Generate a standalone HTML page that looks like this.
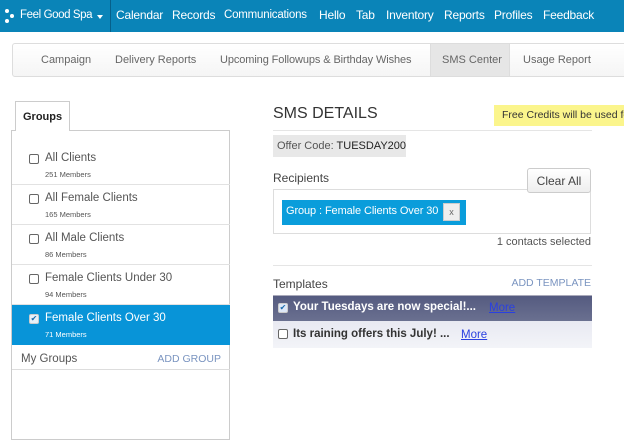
<!DOCTYPE html>
<html><head><meta charset="utf-8"><style>
*{margin:0;padding:0;box-sizing:border-box}
body{width:624px;height:436px;overflow:hidden;background:#fff;font-family:"Liberation Sans",sans-serif;position:relative;color:#444}
.a{position:absolute;white-space:nowrap}
.nav{left:0;top:0;width:624px;height:32px;background:#0a84b8}
.nav span{position:absolute;top:8px;color:#fff;font-size:12px;letter-spacing:-0.2px}
.cb{position:absolute;width:10px;height:10px;border:1.3px solid #666;border-radius:2px;background:#fff}
.row{position:absolute;left:12px;width:218px;height:40px;border-bottom:1px solid #e2e2e2}
.row .t{position:absolute;left:33px;top:7px;font-size:11.5px;color:#555}
.row .m{position:absolute;left:33px;top:25px;font-size:7.5px;color:#555}
.row .cb{left:17px;top:9px}
.s{font-size:11px;color:#666;top:54px}
.r{text-align:right}
</style></head><body>
<div class="a nav">
 <div class="a" style="left:5px;top:9px;width:4px;height:4px;border-radius:50%;background:#fff"></div>
 <div class="a" style="left:10px;top:14px;width:4px;height:4px;border-radius:50%;background:#fff"></div>
 <div class="a" style="left:5px;top:19px;width:4px;height:4px;border-radius:50%;background:#fff"></div>
 <span style="left:20px;top:9px;font-size:11.5px;letter-spacing:-0.4px">Feel Good Spa</span>
 <div class="a" style="left:97px;top:15px;border:3.5px solid transparent;border-top:4px solid #fff"></div>
 <div class="a" style="left:110px;top:0;width:1px;height:32px;background:#06608a"></div>
 <span style="left:116px">Calendar</span>
 <span style="left:172px">Records</span>
 <span style="left:224px;top:9px;font-size:11.5px">Communications</span>
 <span style="left:319px">Hello</span>
 <span style="left:356px">Tab</span>
 <span style="left:386px">Inventory</span>
 <span style="left:444px">Reports</span>
 <span style="left:494px">Profiles</span>
 <span style="left:543px">Feedback</span>
 <div class="a" style="left:261px;top:27px;border:5px solid transparent;border-bottom:5px solid #fff"></div>
</div>
<div class="a" style="left:12px;top:43px;width:620px;height:34px;border:1px solid #ddd;border-radius:3px;background:linear-gradient(#fff,#f5f5f5)"></div>
<div class="a" style="left:430px;top:44px;width:80px;height:32px;background:#e6e6e6;border-left:1px solid #ddd;border-right:1px solid #ddd"></div>
<div class="a s" style="left:41px">Campaign</div>
<div class="a s" style="left:115px">Delivery Reports</div>
<div class="a s" style="left:220px;letter-spacing:-0.1px">Upcoming Followups &amp; Birthday Wishes</div>
<div class="a s" style="left:442px">SMS Center</div>
<div class="a s" style="left:523px">Usage Report</div>

<div class="a" style="left:11px;top:130px;width:219px;height:310px;border:1px solid #ccc"></div>
<div class="a" style="left:15px;top:101px;width:55px;height:30px;border:1px solid #ccc;border-bottom:none;background:#fff;font-size:11px;font-weight:bold;color:#222;padding:9px 0 0 7px">Groups</div>
<div class="row" style="top:145px"><div class="cb"></div><div class="t">All Clients</div><div class="m">251 Members</div></div>
<div class="row" style="top:185px"><div class="cb"></div><div class="t">All Female Clients</div><div class="m">165 Members</div></div>
<div class="row" style="top:225px"><div class="cb"></div><div class="t">All Male Clients</div><div class="m">86 Members</div></div>
<div class="row" style="top:265px"><div class="cb"></div><div class="t">Female Clients Under 30</div><div class="m">94 Members</div></div>
<div class="row" style="top:305px;background:#0894d8;border:none"><div class="cb" style="border-color:#ccc;background:#e8f0f8;font-size:8px;line-height:8px;color:#1a6aaa;text-align:center">✔</div><div class="t" style="color:#fff">Female Clients Over 30</div><div class="m" style="color:#fff">71 Members</div></div>
<div class="a" style="left:21px;top:353px;font-size:11.5px;color:#555">My Groups</div>
<div class="a r" style="left:120px;width:101px;top:353px;font-size:10.5px;color:#7a94c0">ADD GROUP</div>
<div class="a" style="left:12px;top:369px;width:218px;height:1px;background:#ddd"></div>

<div class="a" style="left:273px;top:105px;font-size:16px;color:#333">SMS DETAILS</div>
<div class="a" style="left:494px;top:105px;width:140px;height:21px;background:#fbf58c;font-size:10.5px;color:#333;padding:4px 0 0 8px">Free Credits will be used fo</div>
<div class="a" style="left:273px;top:130px;width:319px;height:1px;background:#e5e5e5"></div>
<div class="a" style="left:273px;top:135px;width:133px;height:22px;background:#e8e8e8;font-size:11px;color:#555;padding:5px 0 0 4px">Offer Code: <span style="color:#222">TUESDAY200</span></div>
<div class="a" style="left:273px;top:171px;font-size:12px;color:#444">Recipients</div>
<div class="a" style="left:273px;top:189px;width:318px;height:45px;border:1px solid #ddd"></div>
<div class="a" style="left:527px;top:168px;width:64px;height:25px;border:1px solid #ccc;border-radius:3px;background:linear-gradient(#fff,#eee);font-size:12px;color:#444;text-align:center;padding-top:5px">Clear All</div>
<div class="a" style="left:282px;top:200px;width:184px;height:25px;background:#0a9ddb;color:#fff;font-size:11px;padding:5px 0 0 4px;letter-spacing:-0.1px">Group : Female Clients Over 30</div>
<div class="a" style="left:443px;top:203px;width:17px;height:18px;background:#eee;border:1px solid #ccc;font-size:9px;color:#666;text-align:center;padding-top:3px">x</div>
<div class="a r" style="left:450px;width:141px;top:236px;font-size:11px;color:#555">1 contacts selected</div>
<div class="a" style="left:273px;top:265px;width:319px;height:1px;background:#e5e5e5"></div>
<div class="a" style="left:273px;top:277px;font-size:12px;color:#444">Templates</div>
<div class="a r" style="left:480px;width:111px;top:277px;font-size:10.5px;color:#7a94c0">ADD TEMPLATE</div>
<div class="a" style="left:273px;top:295px;width:319px;height:26px;background:linear-gradient(#555b80,#6a7090);border-top:1px solid #aab"></div>
<div class="cb" style="left:278px;top:303px;border-color:#ccc;background:#dde8f8;font-size:8px;line-height:8px;color:#1a6aaa;text-align:center">✔</div>
<div class="a" style="left:293px;top:301px;font-size:11.5px;font-weight:bold;color:#fff">Your Tuesdays are now special!...</div>
<div class="a" style="left:489px;top:302px;font-size:11.5px;color:#2a40e0;text-decoration:underline">More</div>
<div class="a" style="left:273px;top:321px;width:319px;height:27px;background:linear-gradient(#e8e9f2,#f3f4f8)"></div>
<div class="cb" style="left:278px;top:329px"></div>
<div class="a" style="left:293px;top:328px;font-size:11.5px;font-weight:bold;color:#333">Its raining offers this July! ...</div>
<div class="a" style="left:461px;top:329px;font-size:11.5px;color:#2a40e0;text-decoration:underline">More</div>
</body></html>
